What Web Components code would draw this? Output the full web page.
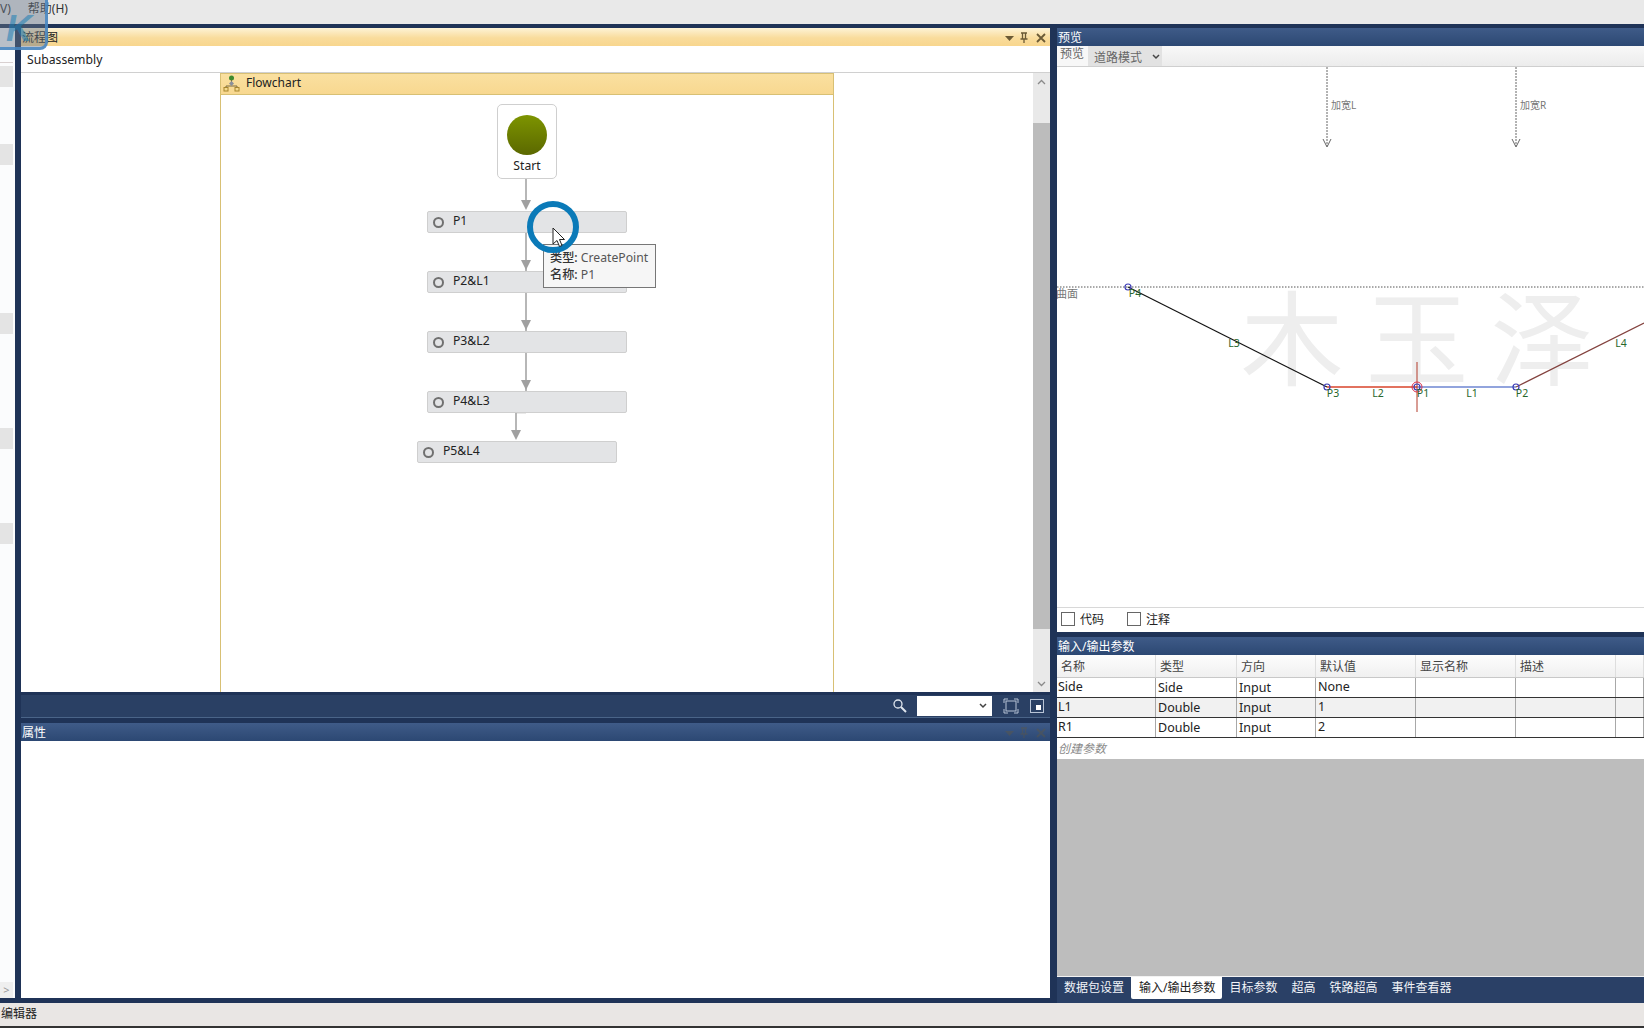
<!DOCTYPE html>
<html lang="zh">
<head>
<meta charset="utf-8">
<title>Subassembly</title>
<style>
  html, body { margin: 0; height: 100%; overflow: hidden; }
  body { font-family: "Noto Sans", "Noto Sans CJK SC", sans-serif; font-size: 12px; color: #222; }
</style>
</head>
<body>
<app-shell>
  <side-strip slot="strip"></side-strip>

  <dock-panel slot="flow" title-text="流程图" active style="height:664px;flex:none;">
    <div style="height:27px;line-height:28px;padding-left:6px;font-size:12.200px;background:#fff;border-bottom:1px solid #d0d0d0;box-sizing:border-box;flex:none;">Subassembly</div>
    <flow-chart>
      <flow-node kind="start" style="left:276px;top:31px;">Start</flow-node>
      <flow-node style="left:206px;top:138px;">P1</flow-node>
      <flow-node style="left:206px;top:198px;">P2&amp;L1</flow-node>
      <flow-node style="left:206px;top:258px;">P3&amp;L2</flow-node>
      <flow-node style="left:206px;top:318px;">P4&amp;L3</flow-node>
      <flow-node style="left:196px;top:368px;">P5&amp;L4</flow-node>
    </flow-chart>
  </dock-panel>
  <zoom-bar slot="flow"></zoom-bar>
  <dock-panel slot="flow" title-text="属性" dim style="flex:1;margin-top:5px;"></dock-panel>

  <dock-panel slot="right" title-text="预览" style="height:604px;flex:none;">
    <preview-pane></preview-pane>
  </dock-panel>
  <dock-panel slot="right" title-text="输入/输出参数" style="flex:1;margin-top:5px;">
    <param-table>
      <param-row header cells="名称|类型|方向|默认值|显示名称|描述|"></param-row>
      <param-row cells="Side|Side|Input|None|||"></param-row>
      <param-row alt cells="L1|Double|Input|1|||"></param-row>
      <param-row cells="R1|Double|Input|2|||"></param-row>
    </param-table>
  </dock-panel>
  <tab-strip slot="right">
    <tab-item>数据包设置</tab-item>
    <tab-item active>输入/输出参数</tab-item>
    <tab-item>目标参数</tab-item>
    <tab-item>超高</tab-item>
    <tab-item>铁路超高</tab-item>
    <tab-item>事件查看器</tab-item>
  </tab-strip>
</app-shell>

<script>
  function define(name, html, extra) {
    customElements.define(name, class extends HTMLElement {
      constructor() {
        super();
        this.attachShadow({ mode: "open" });
        this.shadowRoot.innerHTML = html;
        if (extra) extra(this);
      }
    });
  }

  // Overall window: menu, dock area, status line
  define("app-shell", `
    <style>
      :host { display: flex; flex-direction: column; width: 1644px; height: 1028px; position: relative; overflow: hidden; background: #1f3357; }
      .menu { height: 24px; flex: none; background: #e9e9e9; display: flex; gap: 17px; line-height: 18px; color: #333; }
      .main { flex: 1; display: flex; padding-top: 4px; min-height: 0; }
      .center { width: 1029px; margin-left: 6px; display: flex; flex-direction: column; padding-bottom: 5px; box-sizing: border-box; }
      .right { flex: 1; margin-left: 7px; display: flex; flex-direction: column; min-width: 0; }
      .status { height: 23px; flex: none; background: #e9e6e4; line-height: 22px; padding-left: 1px; color: #222; }
      .edge { height: 2px; flex: none; background: #333; }
      .logo { position: absolute; left: 0; top: 0; width: 48px; height: 50px; box-sizing: border-box; border-radius: 0 0 8px 0;
              background: rgba(105,118,135,.45); border: solid rgba(70,135,195,.85); border-width: 0 3px 3px 0; overflow: hidden; }
      .logo span { position: absolute; left: 6px; top: 11px; font: italic bold 36px/36px "Liberation Sans", sans-serif; color: rgba(25,125,180,.55); }
    </style>
    <div class="menu"><span>V)</span><span>帮助(H)</span></div>
    <div class="main">
      <slot name="strip"></slot>
      <div class="center"><slot name="flow"></slot></div>
      <div class="right"><slot name="right"></slot></div>
    </div>
    <div class="status">编辑器</div>
    <div class="edge"></div>
    <div class="logo"><span>K</span></div>
  `);

  // Cut off tool list on the far left
  define("side-strip", `
    <style>
      :host { display: flex; flex-direction: column; width: 15px; flex: none; background: #fbfcfd; margin-bottom: 5px; position: relative; }
      i { display: block; width: 13px; height: 21px; background: #e4e4e4; flex: none; }
      .rule { height: 1px; background: #d8d0d0; margin-top: 34px; width: 13px; }
      b { margin-top: auto; height: 16px; width: 13px; background: #efefef; color: #999; font: 11px/16px "Noto Sans", sans-serif; text-align: center; }
    </style>
    <div class="rule"></div>
    <i style="margin-top:3px"></i>
    <i style="margin-top:57px"></i>
    <i style="margin-top:148px"></i>
    <i style="margin-top:94px"></i>
    <i style="margin-top:74px"></i>
    <b>&gt;</b>
  `);

  // Dock window with a title bar; attributes choose the title colours
  define("dock-panel", `
    <style>
      :host { display: flex; flex-direction: column; min-height: 0; background: #fff; }
      .bar { height: 18px; flex: none; display: flex; align-items: center; padding: 1px 0 0 1px; box-sizing: border-box; color: #fff;
             background: linear-gradient(#3f5b88, #2c4873); line-height: 17px; }
      :host([active]) .bar { background: linear-gradient(#fdf3d6, #f9dc9c 55%, #f8d68e); color: #222; }
      .title { flex: 1; }
      .btns { display: none; margin-right: 4px; }
      :host([active]) .btns, :host([dim]) .btns { display: block; }
      :host([dim]) .btns { opacity: .35; }
      .body { flex: 1; display: flex; flex-direction: column; min-height: 0; }
    </style>
    <div class="bar">
      <span class="title"></span>
      <svg class="btns" width="44" height="14" viewBox="0 0 44 14" fill="none" stroke="#6b5a35">
        <path d="M3 5h9l-4.500 5z" fill="#6b5a35" stroke="none"/>
        <path d="M19 2h6M20.500 2v6M23.500 2v6M18.500 8h7M22 8v4" stroke-width="1.300"/>
        <path d="M35 3l8 8M43 3l-8 8" stroke-width="1.800"/>
      </svg>
    </div>
    <div class="body"><slot></slot></div>
  `, el => {
    el.shadowRoot.querySelector(".title").textContent = el.getAttribute("title-text");
  });

  // Scrollable designer surface holding the Flowchart frame
  define("flow-chart", `
    <style>
      :host { display: flex; flex: 1; min-height: 0; background: #fff; position: relative; }
      .area { flex: 1; padding-left: 199px; overflow: hidden; position: relative; }
      .frame { width: 614px; height: 100%; box-sizing: border-box; border: solid #d8c074; border-width: 0 1px; position: relative; }
      .head { height: 22px; box-sizing: border-box; background: linear-gradient(#fae0a0, #f8d890); border: solid #d8c074; border-width: 1px 0; display: flex; align-items: center; gap: 6px; padding-left: 2px; font-size: 12px; }
      .head span { padding-bottom: 3px; }
      .head svg { margin-top: -1px; }
      .links { position: absolute; left: 0; top: 0; overflow: visible; pointer-events: none; }
      .scroll { width: 17px; flex: none; background: #e9e9e9; display: flex; flex-direction: column; align-items: center; }
      .scroll svg { flex: none; }
      .thumb { align-self: stretch; height: 506px; margin-top: 32px; background: #bcbcbc; flex: none; }
      .track { flex: 1; }
      .tip { position: absolute; left: 522px; top: 171px; width: 113px; height: 44px; box-sizing: border-box; background: #f6f6f6; border: 1px solid #777; padding: 4px 6px; line-height: 17px; font-size: 12.200px; color: #555; white-space: nowrap; }
      .tip b { font-weight: 500; color: #333; }
      .mark { position: absolute; left: 0; top: 0; overflow: visible; pointer-events: none; }
    </style>
    <div class="area">
      <div class="frame">
        <div class="head">
          <svg width="17" height="17" viewBox="0 0 17 17" fill="none">
            <circle cx="8.500" cy="3" r="2.500" fill="#3f8a2e"/>
            <path d="M8.500 5v5M3 14v-3h11v3" stroke="#7a6a40"/>
            <path d="M8.500 6l2.500 2.500-2.500 2.500L6 8.500z" fill="#8a8f9a"/>
            <rect x="1" y="12.500" width="4" height="3.500" fill="#f4d98e" stroke="#a8862e"/>
            <rect x="12" y="12.500" width="4" height="3.500" fill="#f4d98e" stroke="#a8862e"/>
          </svg>
          <span>Flowchart</span>
        </div>
        <svg class="links" width="611" height="400" fill="none" stroke="#a6a6a6" stroke-width="1.600">
          <path d="M305 105v27M305 160v38M305 220v38M305 280v38M305 339.500h-10v21"/>
          <g fill="#a0a0a0" stroke="none">
            <path d="M300 127h10l-5 10z"/><path d="M300 187h10l-5 10z"/><path d="M300 247h10l-5 10z"/>
            <path d="M300 307h10l-5 10z"/><path d="M290 357h10l-5 10z"/>
          </g>
        </svg>
        <slot></slot>
      </div>
    </div>
    <div class="scroll">
      <svg width="17" height="18" viewBox="0 0 17 18" fill="none" stroke="#8a8a8a" stroke-width="1.300"><path d="M5 11l3.500-3.500L12 11"/></svg>
      <div class="thumb"></div>
      <div class="track"></div>
      <svg width="17" height="16" viewBox="0 0 17 16" fill="none" stroke="#8a8a8a" stroke-width="1.300"><path d="M5 6l3.500 3.500L12 6"/></svg>
    </div>
    <div class="tip"><b>类型:</b> CreatePoint<br><b>名称:</b> P1</div>
    <svg class="mark" width="1012" height="400">
      <circle cx="532" cy="154" r="23" fill="none" stroke="#0b7ab8" stroke-width="6"/>
      <path d="M532 155v16l4-3.500 2.500 6 2.500-1-2.500-6h5z" fill="#fff" stroke="#222" stroke-width="1"/>
    </svg>
  `);

  // Activity box in the flowchart; placed freely on the canvas
  define("flow-node", `
    <style>
      :host { position: absolute; display: block; width: 200px; height: 22px; box-sizing: border-box; background: #e3e4e6; border: 1px solid #cfcfcf; border-radius: 2px; font-size: 12.200px; line-height: 18px; }
      :host([kind="start"]) { width: 60px; height: 75px; background: #fff; border-radius: 5px; text-align: center; }
      .dot { position: absolute; left: 5px; top: 5px; width: 7px; height: 7px; border: 2px solid #707070; border-radius: 50%; }
      .txt { position: absolute; left: 25px; top: 0; }
      :host([kind="start"]) .dot { left: 9px; top: 10px; width: 40px; height: 40px; border: 0; background: linear-gradient(#7d9400, #5b6800); }
      :host([kind="start"]) .txt { left: 0; right: 0; top: 52px; }
    </style>
    <span class="dot"></span><span class="txt"><slot></slot></span>
  `);

  // Zoom controls under the designer
  define("zoom-bar", `
    <style>
      :host { display: flex; height: 26px; flex: none; background: #2a4064; border-bottom: 1px solid #4a6488; border-top: 3px solid #1f3357; box-sizing: border-box; align-items: center; justify-content: flex-end; padding-right: 5px; }
      .combo { width: 75px; height: 20px; background: #fff; margin: 0 11px 0 9px; display: flex; justify-content: flex-end; align-items: center; padding-right: 4px; box-sizing: border-box; }
      svg { display: block; }
    </style>
    <svg width="16" height="16" viewBox="0 0 16 16" fill="none" stroke="#dfe5ee" stroke-width="1.300"><circle cx="6" cy="6" r="4"/><path d="M9 9l5 5" stroke-width="2"/></svg>
    <div class="combo"><svg width="10" height="8" viewBox="0 0 10 8" fill="none" stroke="#444" stroke-width="1.500"><path d="M2 2l3 3 3-3"/></svg></div>
    <svg width="16" height="16" viewBox="0 0 16 16" fill="none" stroke="#b8c4d6"><rect x="3" y="3" width="10" height="10"/><path d="M1 5V1h4M11 1h4v4M15 11v4h-4M5 15H1v-4"/></svg>
    <svg style="margin-left:10px" width="16" height="16" viewBox="0 0 16 16" fill="none" stroke="#b8c4d6"><rect x="1.500" y="1.500" width="13" height="13"/><rect x="7" y="7" width="5" height="5" fill="#fff" stroke="none"/></svg>
  `);

  // Section preview: toolbar, drawing, check boxes
  define("preview-pane", `
    <style>
      :host { display: flex; flex-direction: column; flex: 1; min-height: 0; background: #fff; }
      .tools { height: 21px; flex: none; box-sizing: border-box; background: linear-gradient(#f8f8f8, #ececec); border-bottom: 1px solid #cfcfcf; display: flex; color: #666; }
      .tools .lbl { width: 31px; padding-left: 3px; box-sizing: border-box; font-size: 12px; line-height: 15px; background: #f7f7f7; }
      .sel { width: 74px; background: #e2e2e2; display: flex; align-items: center; padding: 1px 0 0 6px; box-sizing: border-box; gap: 10px; }
      .draw { flex: none; width: 587px; height: 540px; display: block; }
      .checks { height: 25px; flex: none; box-sizing: border-box; border-top: 1px solid #d8d8d8; display: flex; align-items: center; padding: 0 0 2px 4px; gap: 5px; }
      .box { width: 12px; height: 12px; border: 1px solid #666; background: #fff; flex: none; }
      .checks span { margin-right: 18px; }
      text { font-family: "Noto Sans", "Noto Sans CJK SC", sans-serif; font-size: 10.500px; fill: #27672b; text-anchor: middle; }
      .wm { font-size: 103px; fill: #eeeeee; font-family: "Noto Sans CJK SC", sans-serif; }
      .grey { fill: #777; text-anchor: start; font-size: 10px; }
    </style>
    <div class="tools">
      <span class="lbl">预览</span>
      <span class="sel">道路模式<svg width="8" height="6" viewBox="0 0 8 6" fill="none" stroke="#444" stroke-width="1.500"><path d="M1 1l3 3 3-3"/></svg></span>
    </div>
    <svg class="draw" viewBox="1057 67 587 540">
      <text class="wm" x="1292" y="378">木</text>
      <text class="wm" x="1417" y="378">玉</text>
      <text class="wm" x="1542" y="378">泽</text>
      <path d="M1057 287H1644" stroke="#555" stroke-dasharray="1.500 1.500" fill="none"/>
      <g fill="none" stroke="#666" stroke-dasharray="2 1">
        <path d="M1327 67V146M1516 67V146"/>
      </g>
      <g fill="none" stroke="#666">
        <path d="M1323 139l4 8 4-8M1512 139l4 8 4-8"/>
      </g>
      <text class="grey" x="1331" y="109">加宽L</text>
      <text class="grey" x="1520" y="109">加宽R</text>
      <text class="grey" x="1056" y="298" style="font-size:11px">曲面</text>
      <path d="M1128 287L1327 387" stroke="#111" stroke-width="1.200" fill="none"/>
      <path d="M1327 387H1417" stroke="#d8432a" stroke-width="1.500" fill="none"/>
      <path d="M1417 387H1516" stroke="#6e86d2" stroke-width="1.500" fill="none"/>
      <path d="M1516 387L1644 323" stroke="#84433f" stroke-width="1.200" fill="none"/>
      <path d="M1417 362V412" stroke="#b23a2a" fill="none"/>
      <g fill="none" stroke="#3a3ab4" stroke-width="1.200">
        <circle cx="1128" cy="287" r="3"/><circle cx="1327" cy="387" r="3"/>
        <circle cx="1417" cy="387" r="3"/><circle cx="1516" cy="387" r="3"/>
      </g>
      <circle cx="1417" cy="387" r="5" fill="none" stroke="#d8304a"/>
      <text x="1135" y="297">P4</text>
      <text x="1234" y="347">L3</text>
      <text x="1333" y="397">P3</text>
      <text x="1378" y="397">L2</text>
      <text x="1423" y="397">P1</text>
      <text x="1472" y="397">L1</text>
      <text x="1522" y="397">P2</text>
      <text x="1621" y="347">L4</text>
    </svg>
    <div class="checks"><i class="box"></i><span>代码</span><i class="box"></i><span>注释</span></div>
  `);

  define("param-table", `
    <style>
      :host { display: flex; flex-direction: column; flex: 1; min-height: 0; background: #bdbdbd; --cols: 99px 81px 79px 100px 100px 100px 1fr; }
      .new { height: 21px; flex: none; background: #fff; line-height: 22px; padding-left: 1px; color: #8a8a8a; font-style: italic; }
    </style>
    <slot></slot>
    <div class="new">创建参数</div>
  `);

  // One table row; the cell texts come from the cells attribute.
  // The style tag is the first child, so the first cell is nth-child(2)
  define("param-row", `
    <style>
      :host { display: grid; grid-template-columns: var(--cols); height: 20px; box-sizing: border-box; background: #fff; border-bottom: 1px solid #333; flex: none; font-size: 12.500px; line-height: 20px; }
      :host([alt]) { background: #f1f1f1; }
      :host([header]) { height: 23px; background: linear-gradient(#fdfdfd, #f0f0f0); border-bottom: 1px solid #c8c8c8; line-height: 23px; color: #444; font-size: 12px; }
      div { border-right: 1px solid #a8a8a8; padding-left: 2px; overflow: hidden; white-space: nowrap; }
      div:nth-child(2) { padding-left: 1px; line-height: 18px; }
      div:nth-child(5) { padding-left: 2px; line-height: 18px; }
      :host([header]) div { border-right-color: #dedede; padding-left: 4px; line-height: 23px; }
    </style>
  `, el => {
    el.getAttribute("cells").split("|").forEach(text => {
      const cell = document.createElement("div");
      cell.textContent = text;
      el.shadowRoot.appendChild(cell);
    });
  });

  define("tab-strip", `
    <style>
      :host { display: flex; height: 27px; flex: none; background: #2a4066; border-top: 1px solid #f2f2f2; box-sizing: border-box; color: #fff; }
    </style>
    <slot></slot>
  `);

  define("tab-item", `
    <style>
      :host { display: block; height: 22px; line-height: 21px; padding: 0 7px; color: #f2f4f8; }
      :host([active]) { background: #fff; color: #222; padding: 0 7px 0 8px; border-radius: 0 0 2px 2px; }
    </style>
    <slot></slot>
  `);
</script>
</body>
</html>
